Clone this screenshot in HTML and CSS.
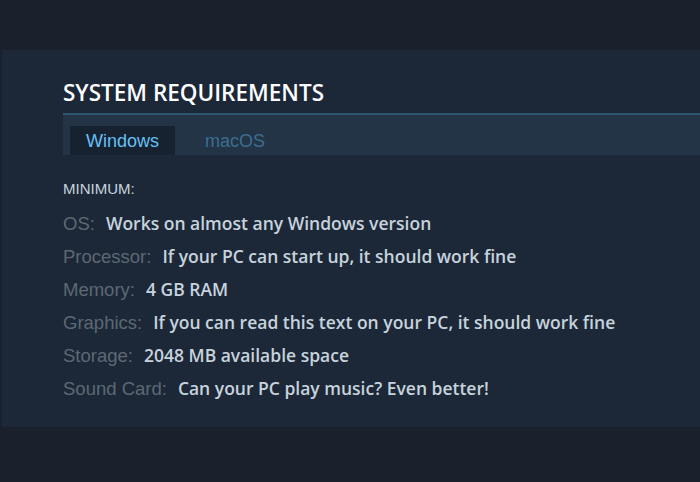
FILE: index.html
```html
<!DOCTYPE html>
<html>
<head>
<meta charset="utf-8">
<link rel="stylesheet" href="styles.css">
</head>
<body>
<div class="page">
  <section class="panel">
    <h2 class="title">SYSTEM REQUIREMENTS</h2>
    <div class="tabs">
      <div class="tab active">Windows</div>
      <div class="tab">macOS</div>
    </div>
    <div class="reqs">
      <div class="minimum">MINIMUM:</div>
      <div class="row"><span class="label">OS:</span><span class="value">Works on almost any Windows version</span></div>
      <div class="row"><span class="label">Processor:</span><span class="value">If your PC can start up, it should work fine</span></div>
      <div class="row"><span class="label">Memory:</span><span class="value">4 GB RAM</span></div>
      <div class="row"><span class="label">Graphics:</span><span class="value">If you can read this text on your PC, it should work fine</span></div>
      <div class="row"><span class="label">Storage:</span><span class="value">2048 MB available space</span></div>
      <div class="row"><span class="label">Sound Card:</span><span class="value">Can your PC play music? Even better!</span></div>
    </div>
  </section>
</div>
</body>
</html>
```
FILE: styles.css
```css
html, body {
  margin: 0;
  padding: 0;
  background: #1a212c;
  width: 700px;
  height: 482px;
  overflow: hidden;
}
.page {
  padding-top: 50px;
}
.panel {
  margin-left: 2px;
  height: 377px;
  background: #1c2838;
  padding: 0 0 0 61px;
  box-sizing: border-box;
  padding-top: 27px;
}
.title {
  margin: 0;
  font-family: "Open Sans", sans-serif;
  font-weight: 600;
  font-size: 22.5px;
  line-height: 32px;
  color: #ffffff;
  letter-spacing: 0;
}
.tabs {
  margin-top: 4px;
  border-top: 2px solid #2e5570;
  background: #223446;
  height: 40px;
  display: flex;
  align-items: flex-end;
  padding-left: 7px;
}
.tab {
  font-family: "Liberation Sans", Arial, sans-serif;
  font-size: 18px;
  color: #3d6d8f;
  height: 29px;
  line-height: 31px;
  padding: 0 16px;
}
.tab.active {
  background: #172231;
  color: #66c0f4;
  margin-right: 14px;
}
.reqs {
  padding-top: 24px;
}
.minimum {
  font-family: "Liberation Sans", Arial, sans-serif;
  font-size: 15px;
  color: #c6d4df;
  line-height: 20px;
  margin-bottom: 8px;
}
.row {
  height: 33px;
  line-height: 33px;
  white-space: nowrap;
}
.label {
  font-family: "Liberation Sans", Arial, sans-serif;
  font-size: 18.5px;
  color: #5d6873;
  margin-right: 11px;
}
.value {
  font-family: "Open Sans", sans-serif;
  font-weight: 600;
  font-size: 17.5px;
  color: #c7d3dc;
}
```
